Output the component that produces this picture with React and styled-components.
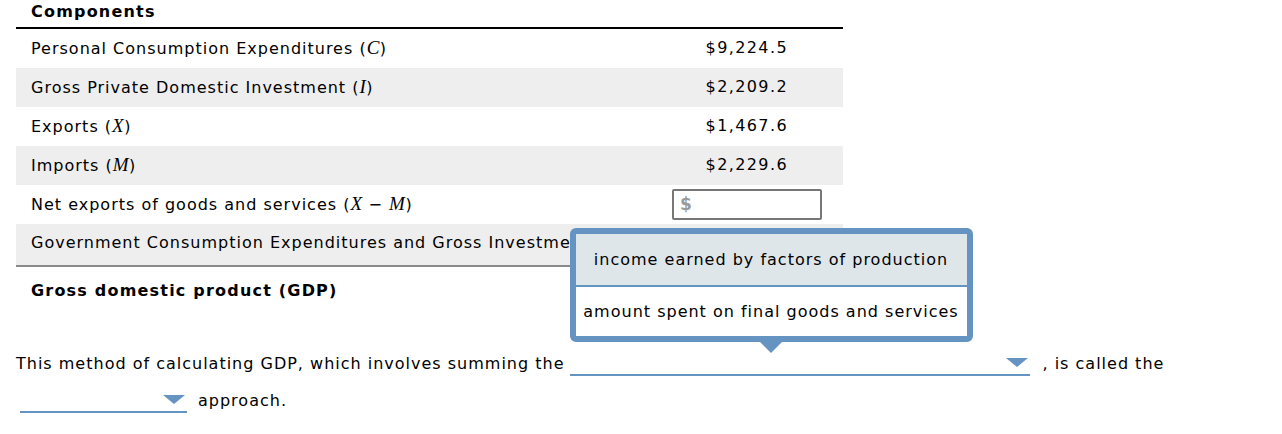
import React from "react";
import styled, { createGlobalStyle } from "styled-components";

const GlobalStyle = createGlobalStyle`
  body {
    margin: 0;
    background: #fff;
    font-family: "DejaVu Sans", Verdana, sans-serif;
    font-size: 16px;
    letter-spacing: 1px;
    color: #000;
  }
`;

const Page = styled.div`
  padding: 0 16px;
  width: 1170px;
`;

const Table = styled.div`
  width: 827px;
`;

const HeaderRow = styled.div`
  height: 27px;
  line-height: 24px;
  padding-left: 15px;
  font-weight: bold;
  letter-spacing: 1.2px;
  border-bottom: 2px solid #000;
`;

const Row = styled.div`
  display: grid;
  grid-template-columns: 1fr 171px;
  align-items: center;
  height: ${p => p.$tall ? "43px" : "39px"};
  padding-bottom: ${p => p.$tall ? "5px" : "2px"};
  box-sizing: border-box;
  background: ${p => p.$shaded ? "#eeeeee" : "#fff"};
  border-bottom: ${p => p.$rule ? "2px solid #8a8a8a" : "none"};
  white-space: nowrap;
  overflow: hidden;
`;

const Label = styled.div`
  padding-left: 15px;
  font-weight: ${p => p.$bold ? "bold" : "normal"};
  letter-spacing: ${p => p.$bold ? "1.2px" : "inherit"};
  align-self: ${p => p.$top ? "start" : "center"};
  padding-top: ${p => p.$top ? "14px" : "0"};
`;

const Cell = styled.div`
  display: flex;
  align-items: center;
`;

const Value = styled.span`
  display: inline-block;
  width: 116px;
  text-align: right;
  letter-spacing: 1.4px;
`;

const Var = styled.i`
  font-family: "Liberation Serif", "Times New Roman", serif;
  font-size: 19px;
  letter-spacing: 0.5px;
`;

const MoneyInput = styled.div`
  width: 150px;
  height: 31px;
  margin-top: 2px;
  box-sizing: border-box;
  border: 2px solid #777;
  border-radius: 2px;
  color: #9a9a9a;
  font-size: 17px;
  font-weight: bold;
  padding-left: 6px;
  line-height: 27px;
  background: #fff;
`;

const Sentence = styled.p`
  margin: 35px 0 0;
  line-height: 37px;
`;

const Dropdown = styled.span`
  position: relative;
  display: inline-block;
  vertical-align: -7px;
  width: ${p => p.$width}px;
  height: 16px;
  margin: 0 ${p => p.$right}px 0 ${p => p.$left}px;
  border-bottom: 2px solid #6593c2;
`;

const Caret = styled.span`
  position: absolute;
  right: 2px;
  top: 0;
  width: 0;
  height: 0;
  border-left: 11px solid transparent;
  border-right: 11px solid transparent;
  border-top: 9px solid #6593c2;
`;

const Menu = styled.div`
  position: absolute;
  left: 0;
  bottom: 32px;
  width: 403px;
  box-sizing: border-box;
  border: 6px solid #6593c2;
  border-radius: 6px;
  background: #fff;
  line-height: normal;

  &::after {
    content: "";
    position: absolute;
    left: 50%;
    margin-left: -11px;
    bottom: -17px;
    border-left: 11px solid transparent;
    border-right: 11px solid transparent;
    border-top: 11px solid #6593c2;
  }
`;

const Option = styled.div`
  height: ${p => p.$h}px;
  display: flex;
  align-items: center;
  justify-content: center;
  background: ${p => p.$active ? "#dfe6ea" : "#fff"};
  border-bottom: ${p => p.$sep ? "2px solid #6593c2" : "none"};
  white-space: nowrap;
`;

const rows = [
  { label: "Personal Consumption Expenditures", v: "C", value: "$9,224.5" },
  { label: "Gross Private Domestic Investment", v: "I", value: "$2,209.2" },
  { label: "Exports", v: "X", value: "$1,467.6" },
  { label: "Imports", v: "M", value: "$2,229.6" },
];

export default function App() {
  return (
    <>
      <GlobalStyle />
      <Page>
        <Table>
          <HeaderRow>Components</HeaderRow>
          {rows.map((r, i) => (
            <Row key={r.label} $shaded={i % 2 === 1}>
              <Label>
                {r.label} (<Var>{r.v}</Var>)
              </Label>
              <Cell>
                <Value>{r.value}</Value>
              </Cell>
            </Row>
          ))}
          <Row>
            <Label>
              Net exports of goods and services (<Var>X</Var> − <Var>M</Var>)
            </Label>
            <Cell>
              <MoneyInput>$</MoneyInput>
            </Cell>
          </Row>
          <Row $shaded $tall $rule>
            <Label>Government Consumption Expenditures and Gross Investment (<Var>G</Var>)</Label>
            <Cell />
          </Row>
          <Row $tall>
            <Label $bold $top>Gross domestic product (GDP)</Label>
            <Cell />
          </Row>
        </Table>
        <Sentence>
          This method of calculating GDP, which involves summing the
          <Dropdown $width={460} $left={5} $right={13}>
            <Caret />
            <Menu>
              <Option $h={51} $active $sep>income earned by factors of production</Option>
              <Option $h={49}>amount spent on final goods and services</Option>
            </Menu>
          </Dropdown>
          , is called the
          <Dropdown $width={167} $left={4} $right={11}>
            <Caret />
          </Dropdown>
          approach.
        </Sentence>
      </Page>
    </>
  );
}
